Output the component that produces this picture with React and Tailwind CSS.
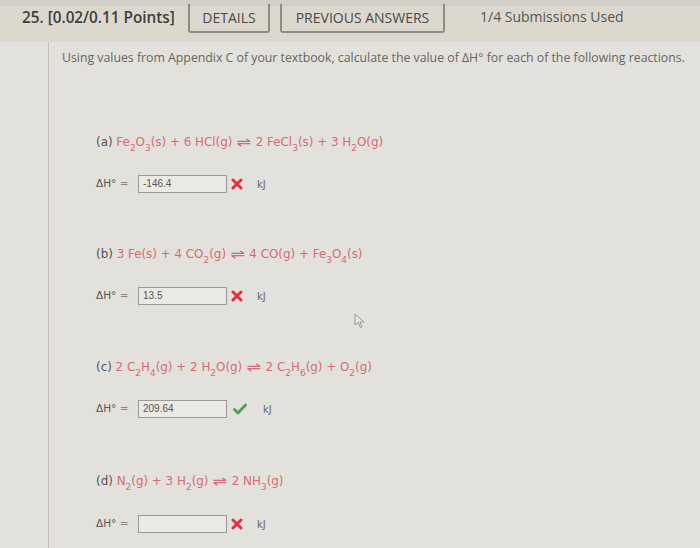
import React from 'react';

function Eq({ label, children }) {
  return (
    <div className="h-4 leading-4 text-[11.9px] text-[#d66a74] font-['DejaVu_Sans',sans-serif] whitespace-nowrap">
      <span className="text-[#555]">({label})</span> {children}
    </div>
  );
}

const Sub = ({ children }) => <sub className="text-[9px] leading-none align-[-3px]">{children}</sub>;

const Arrow = () => <span className="inline-block text-[14px] leading-none scale-x-125 mx-[2px] align-[-1px]">⇌</span>;

function Cross() {
  return (
    <svg width="12" height="12" viewBox="0 0 12 12">
      <path d="M2 2 L10 10 M10 2 L2 10" stroke="#e0313f" strokeWidth="3" strokeLinecap="round" />
    </svg>
  );
}

function Check() {
  return (
    <svg width="14" height="12" viewBox="0 0 14 12">
      <path d="M1.5 6.5 L5 10 L12.5 2" stroke="#4f9d57" strokeWidth="2.8" fill="none" strokeLinecap="round" strokeLinejoin="round" />
    </svg>
  );
}

function Answer({ value, ok, mt }) {
  return (
    <div className={`flex items-center h-[18px] ${mt}`}>
      <span className="text-[10.5px] text-[#555] w-[42px] font-['DejaVu_Sans',sans-serif]">ΔH° <span className="text-[#888]">=</span></span>
      <div className="w-[89px] h-[18px] border border-[#9c9a95] bg-[#ebe9e4] text-[10px] text-[#555] leading-[16px] px-1 font-['Liberation_Sans',sans-serif]">
        {value}
      </div>
      <div className={`flex justify-center ${ok ? 'w-[26px]' : 'w-[20px]'}`}>{ok ? <Check /> : <Cross />}</div>
      <span className="text-[10px] text-[#666] ml-[10px] font-['DejaVu_Sans',sans-serif]">kJ</span>
    </div>
  );
}

export default function App() {
  return (
    <div className="w-[700px] h-[548px] overflow-hidden bg-[#e3e1db] font-['Open_Sans',sans-serif] relative">
      <div className="h-[6px] bg-[#d2cfc8]" />
      {/* Header */}
      <div className="h-[36px] bg-[#dcd8ce] flex items-start pl-[22px]">
        <div className="text-[15.3px] font-semibold text-[#3e3e3e] w-[166px] whitespace-nowrap">25. [0.02/0.11 Points]</div>
        <div className="h-[29px] w-[82px] border-x-2 border-b-2 border-[#8e8b86] rounded-b-[3px] flex items-center justify-center text-[14px] text-[#4a4a4a] -mt-[2px]">
          DETAILS
        </div>
        <div className="h-[29px] w-[165px] ml-[10px] border-x-2 border-b-2 border-[#8e8b86] rounded-b-[3px] flex items-center justify-center text-[14px] text-[#4a4a4a] -mt-[2px]">
          PREVIOUS ANSWERS
        </div>
        <div className="text-[14px] text-[#555] ml-[35px]">1/4 Submissions Used</div>
      </div>
      {/* Content */}
      <div className="ml-[48px] border-l border-[#c2bfb8] h-[506px] pl-[13px] pt-[8px]">
        <div className="text-[12.3px] leading-4 text-[#666] whitespace-nowrap">
          Using values from Appendix C of your textbook, calculate the value of ΔH° for each of the following reactions.
        </div>
        <div className="pl-[34px]">
          <div className="mt-[68px]">
            <Eq label="a">
              Fe<Sub>2</Sub>O<Sub>3</Sub>(s) + 6 HCl(g) <Arrow /> 2 FeCl<Sub>3</Sub>(s) + 3 H<Sub>2</Sub>O(g)
            </Eq>
          </div>
          <Answer value="-146.4" mt="mt-[25px]" />
          <div className="mt-[53px]">
            <Eq label="b">
              3 Fe(s) + 4 CO<Sub>2</Sub>(g) <Arrow /> 4 CO(g) + Fe<Sub>3</Sub>O<Sub>4</Sub>(s)
            </Eq>
          </div>
          <Answer value="13.5" mt="mt-[25px]" />
          <div className="mt-[54px]">
            <Eq label="c">
              2 C<Sub>2</Sub>H<Sub>4</Sub>(g) + 2 H<Sub>2</Sub>O(g) <Arrow /> 2 C<Sub>2</Sub>H<Sub>6</Sub>(g) + O<Sub>2</Sub>(g)
            </Eq>
          </div>
          <Answer value="209.64" ok mt="mt-[25px]" />
          <div className="mt-[55px]">
            <Eq label="d">
              N<Sub>2</Sub>(g) + 3 H<Sub>2</Sub>(g) <Arrow /> 2 NH<Sub>3</Sub>(g)
            </Eq>
          </div>
          <Answer value="" mt="mt-[26px]" />
        </div>
      </div>
      {/* mouse cursor */}
      <svg className="absolute left-[354px] top-[313px]" width="12" height="16" viewBox="0 0 12 16">
        <path d="M1 1 L1 12 L4 9.5 L6.5 14.5 L8 13.8 L5.8 9 L10 9 Z" fill="#e8e6e0" stroke="#9a9893" strokeWidth="1" />
      </svg>
    </div>
  );
}
